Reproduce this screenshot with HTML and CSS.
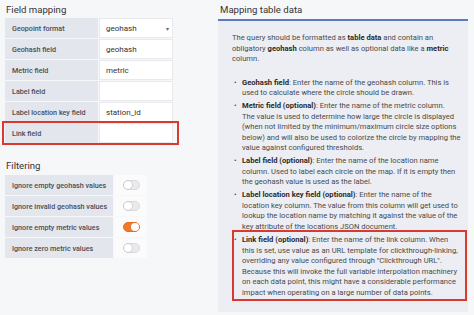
FILE: index.html
```html
<!DOCTYPE html>
<html lang="en">
<head>
  <meta charset="UTF-8" />
  <meta name="viewport" content="width=device-width, initial-scale=1.0" />
  <title>Worldmap panel – Options</title>
  <link rel="stylesheet" href="styles.css">
</head>
<body>
  <div class="editor">
    <section class="options">
      <h5 class="section-title">Field mapping</h5>

      <div class="form-row">
        <label class="form-label">Geopoint format</label>
        <div class="form-value select">geohash<span class="caret">&#9662;</span></div>
      </div>
      <div class="form-row">
        <label class="form-label">Geohash field</label>
        <div class="form-value">geohash</div>
      </div>
      <div class="form-row">
        <label class="form-label">Metric field</label>
        <div class="form-value">metric</div>
      </div>
      <div class="form-row">
        <label class="form-label">Label field</label>
        <div class="form-value"></div>
      </div>
      <div class="form-row">
        <label class="form-label">Label location key field</label>
        <div class="form-value">station_id</div>
      </div>
      <div class="form-row highlight">
        <label class="form-label">Link field</label>
        <div class="form-value"></div>
      </div>

      <h5 class="section-title filtering">Filtering</h5>

      <div class="switch-row">
        <label class="form-label">Ignore empty geohash values</label>
        <div class="switch-cell"><span class="switch"></span></div>
      </div>
      <div class="switch-row">
        <label class="form-label">Ignore invalid geohash values</label>
        <div class="switch-cell"><span class="switch"></span></div>
      </div>
      <div class="switch-row">
        <label class="form-label">Ignore empty metric values</label>
        <div class="switch-cell"><span class="switch on"></span></div>
      </div>
      <div class="switch-row">
        <label class="form-label">Ignore zero metric values</label>
        <div class="switch-cell"><span class="switch"></span></div>
      </div>
    </section>

    <section class="help">
      <h5 class="help-title">Mapping table data</h5>
      <div class="help-box">
        <p>The query should be formatted as <strong>table data</strong> and contain an<br>
          obligatory <strong>geohash</strong> column as well as optional data like a <strong>metric</strong><br>
          column.</p>
        <ul>
          <li><strong>Geohash field</strong>: Enter the name of the geohash column. This is<br>
            used to calculate where the circle should be drawn.</li>
          <li><strong>Metric field (optional)</strong>: Enter the name of the metric column.<br>
            The value is used to determine how large the circle is displayed<br>
            (when not limited by the minimum/maximum circle size options<br>
            below) and will also be used to colorize the circle by mapping the<br>
            value against configured thresholds.</li>
          <li><strong>Label field (optional)</strong>: Enter the name of the location name<br>
            column. Used to label each circle on the map. If it is empty then<br>
            the geohash value is used as the label.</li>
          <li><strong>Label location key field (optional)</strong>: Enter the name of the<br>
            location key column. The value from this column will get used to<br>
            lookup the location name by matching it against the value of the<br>
            key attribute of the locations JSON document.</li>
          <li class="highlight"><strong>Link field (optional)</strong>: Enter the name of the link column. When<br>
            this is set, use value as an URL template for clickthrough-linking,<br>
            overriding any value configured through "Clickthrough URL".<br>
            Because this will invoke the full variable interpolation machinery<br>
            on each data point, this might have a considerable performance<br>
            impact when operating on a large number of data points.</li>
        </ul>
      </div>
    </section>
  </div>
</body>
</html>
```

FILE: styles.css
```css
body {
  margin: 0;
  font-family: Roboto, 'Liberation Sans', sans-serif;
  background-color: #f6f7f9;
  color: #3b3b3b;
}

.editor {
  display: flex;
  width: 474px;
  height: 315px;
  overflow: hidden;
}

/* Linke Spalte: Formular */
.options {
  width: 213px;
  padding-left: 5px;
  flex-shrink: 0;
}

.section-title {
  margin: 0;
  height: 18px;
  line-height: 20px;
  padding-left: 1px;
  font-size: 9.6px;
  font-weight: 400;
  color: #333;
}

.section-title.filtering {
  margin-top: 14px;
  line-height: 18px;
}

.form-row,
.switch-row {
  display: flex;
  gap: 1px;
  height: 20px;
  margin-bottom: 1px;
}

.form-label {
  display: flex;
  align-items: center;
  width: 86px;
  padding-left: 7px;
  background-color: #e3e6ec;
  font-size: 7.2px;
  font-weight: 500;
  color: #4a4d55;
}

.form-value {
  display: flex;
  align-items: center;
  padding: 0 3px 0 6px;
  background-color: #fff;
  border: 1px solid #e8e9ec;
  box-sizing: border-box;
  width: 74px;
  font-size: 8px;
  color: #333;
}

.form-value.select {
  justify-content: space-between;
}

.caret {
  font-size: 6px;
  color: #666;
}

.form-row.highlight {
  outline: 2px solid #d9392e;
  outline-offset: 0;
  margin-left: -1px;
  padding-left: 1px;
  width: 172px;
}

.switch-row .form-label {
  width: 101px;
}

.switch-cell {
  display: flex;
  align-items: center;
  width: 33px;
  padding-left: 9px;
  box-sizing: border-box;
  background-color: #fbfbfc;
}

.switch {
  display: flex;
  align-items: center;
  width: 17px;
  height: 10px;
  border-radius: 5px;
  background-color: #e9eaed;
  border: 1px solid #d9dadd;
  box-sizing: border-box;
}

.switch::before {
  content: "";
  width: 8px;
  height: 8px;
  border-radius: 50%;
  background-color: #fff;
  box-shadow: 0 0 0 0.6px #b9bbc0;
}

.switch.on {
  background-color: #f07a2b;
  border-color: #e86e1f;
  justify-content: flex-end;
}

.switch.on::before {
  box-shadow: none;
}

/* Rechte Spalte: Hilfe */
.help {
  width: 250px;
  flex-shrink: 0;
}

.help-title {
  margin: 0;
  height: 19px;
  line-height: 20px;
  padding-left: 2px;
  font-size: 9.6px;
  font-weight: 400;
  color: #333;
  border-bottom: 2px solid #5b7cb6;
}

.help-box {
  background-color: #eceef3;
  padding: 12px 4px 11px 14px;
  font-size: 7.6px;
  line-height: 10.5px;
  color: #4a4a4a;
  white-space: nowrap;
}

.help-box strong {
  color: #2a2a2a;
}

.help-box p {
  margin: 0 0 13px;
}

.help-box ul {
  list-style: none;
  margin: 0;
  padding: 0;
}

.help-box li {
  padding-left: 10px;
  text-indent: -10px;
  margin-top: 2.5px;
}

.help-box li::before {
  content: "•";
  display: inline-block;
  width: 8px;
  padding-left: 2px;
  text-indent: 0;
}

.help-box li.highlight {
  border: 2px solid #d9392e;
  margin: -2px -3px 0 0;
  padding: 3px 1px 1px 8px;
  text-indent: -8px;
}

.help-box li.highlight::before {
  width: 8px;
  padding-left: 0;
}
```
